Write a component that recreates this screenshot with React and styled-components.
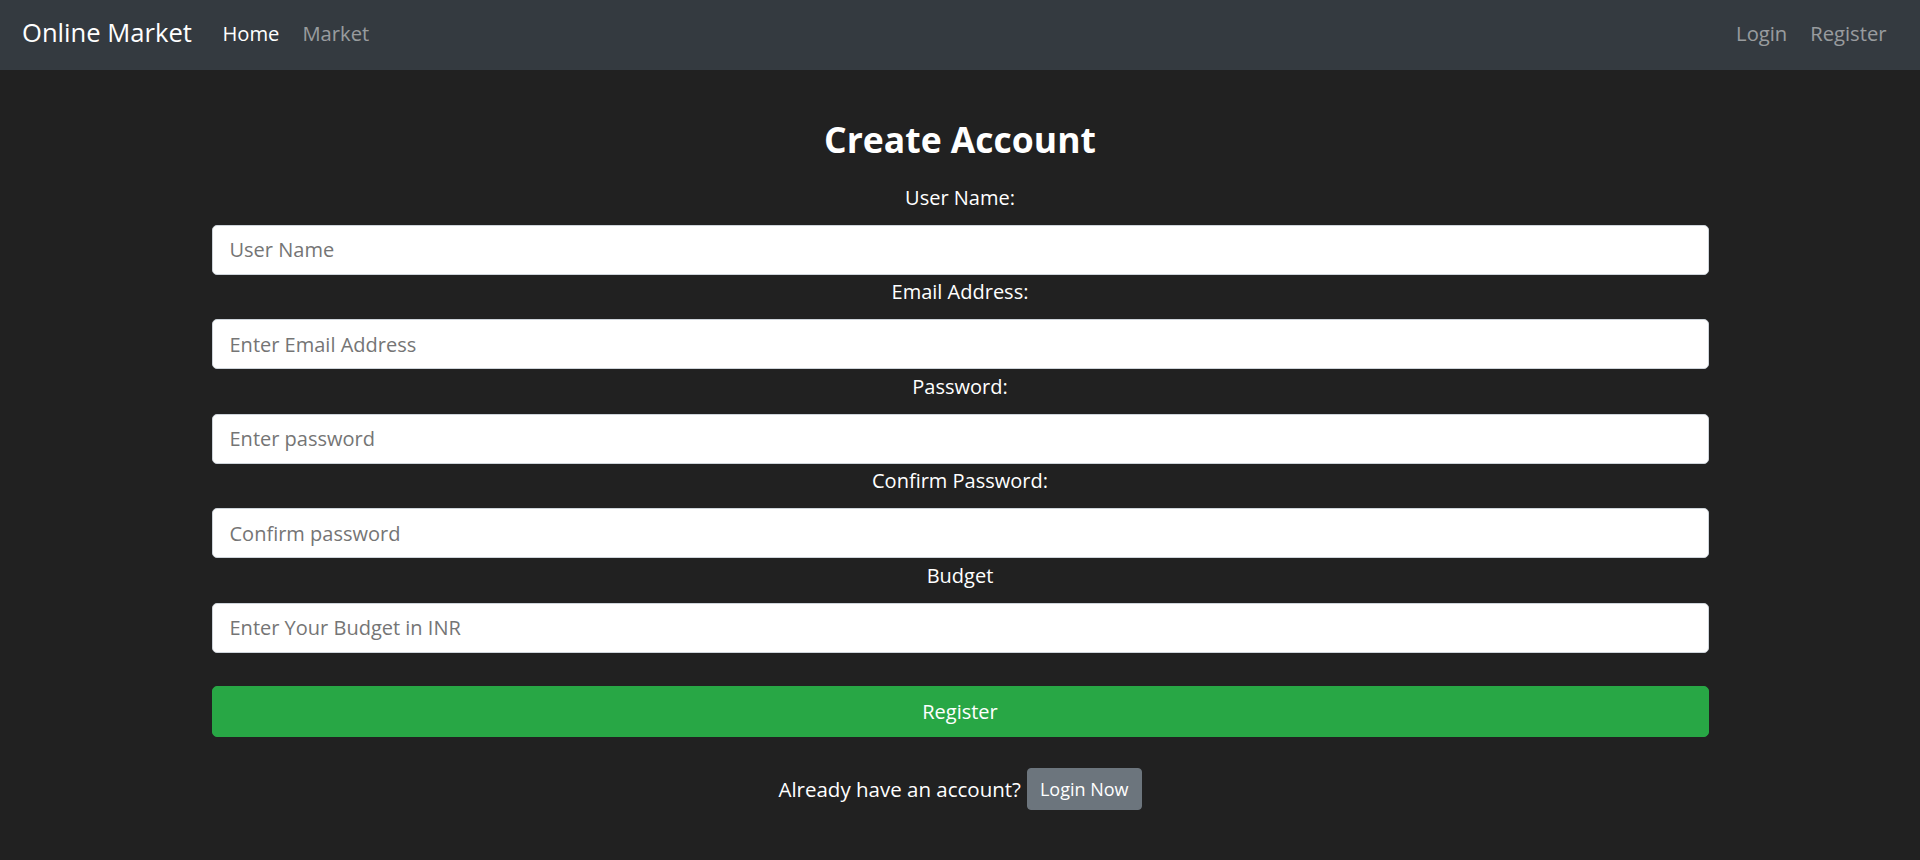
import React from "react";
import styled, { createGlobalStyle } from "styled-components";

const GlobalStyle = createGlobalStyle`
  * {
    box-sizing: border-box;
  }

  body {
    margin: 0;
    background: #212121;
    color: #ffffff;
    font-family: "Open Sans", "Noto Sans", sans-serif;
    font-size: 20px;
  }
`;

const NavBar = styled.nav`
  display: flex;
  align-items: center;
  justify-content: space-between;
  height: 70px;
  padding: 0 22px 5px;
  background: #343a40;
`;

const NavGroup = styled.div`
  display: flex;
  align-items: center;
`;

const Brand = styled.a`
  font-size: 25.6px;
  color: #ffffff;
  text-decoration: none;
  margin-right: 19px;
`;

const NavLink = styled.a`
  padding: 0 11.5px;
  font-size: 20.2px;
  text-decoration: none;
  color: ${props => (props.active ? "#ffffff" : "rgba(255, 255, 255, 0.5)")};
`;

const Container = styled.main`
  max-width: 1497px;
  margin: 0 auto;
  padding-top: 48px;
`;

const Title = styled.h2`
  margin: 0 0 20px;
  font-size: 35.5px;
  font-weight: 700;
  line-height: 1.2;
  text-align: center;
`;

const Field = styled.div`
  display: flex;
  flex-direction: column;
  margin-bottom: 0.5px;
`;

const Label = styled.label`
  display: block;
  line-height: 30px;
  padding-top: 2px;
  margin-bottom: 12px;
  text-align: center;
`;

const Input = styled.input`
  display: block;
  width: 100%;
  height: 50px;
  padding: 0 17px;
  font: inherit;
  font-size: 20px;
  color: #495057;
  background: #ffffff;
  border: 1px solid #ced4da;
  border-radius: 5px;
  outline: none;

  ::placeholder {
    color: #6c757d;
  }
`;

const SubmitButton = styled.button`
  display: block;
  width: 100%;
  height: 51px;
  margin-top: 33px;
  font: inherit;
  font-size: 20px;
  color: #ffffff;
  background: #28a745;
  border: 1px solid #28a745;
  border-radius: 5px;
  cursor: pointer;
`;

const Footer = styled.div`
  display: flex;
  justify-content: center;
  align-items: center;
  gap: 6px;
  margin-top: 31px;
  font-size: 20.5px;
`;

const SmallButton = styled.button`
  height: 42px;
  padding: 0 12px;
  font: inherit;
  font-size: 18px;
  color: #ffffff;
  background: #6c757d;
  border: 1px solid #6c757d;
  border-radius: 4px;
  cursor: pointer;
`;

const fields = [
  { label: "User Name:", placeholder: "User Name", type: "text" },
  { label: "Email Address:", placeholder: "Enter Email Address", type: "email" },
  { label: "Password:", placeholder: "Enter password", type: "password" },
  { label: "Confirm Password:", placeholder: "Confirm password", type: "password" },
  { label: "Budget", placeholder: "Enter Your Budget in INR", type: "text" }
];

const App = () => {
  return (
    <>
      <GlobalStyle />
      <NavBar>
        <NavGroup>
          <Brand href="#">Online Market</Brand>
          <NavLink href="#" active>
            Home
          </NavLink>
          <NavLink href="#">Market</NavLink>
        </NavGroup>
        <NavGroup>
          <NavLink href="#">Login</NavLink>
          <NavLink href="#">Register</NavLink>
        </NavGroup>
      </NavBar>

      <Container>
        <Title>Create Account</Title>
        {fields.map(field => (
          <Field key={field.label}>
            <Label>{field.label}</Label>
            <Input type={field.type} placeholder={field.placeholder} />
          </Field>
        ))}
        <SubmitButton>Register</SubmitButton>
        <Footer>
          <span>Already have an account?</span>
          <SmallButton>Login Now</SmallButton>
        </Footer>
      </Container>
    </>
  );
};

export default App;
